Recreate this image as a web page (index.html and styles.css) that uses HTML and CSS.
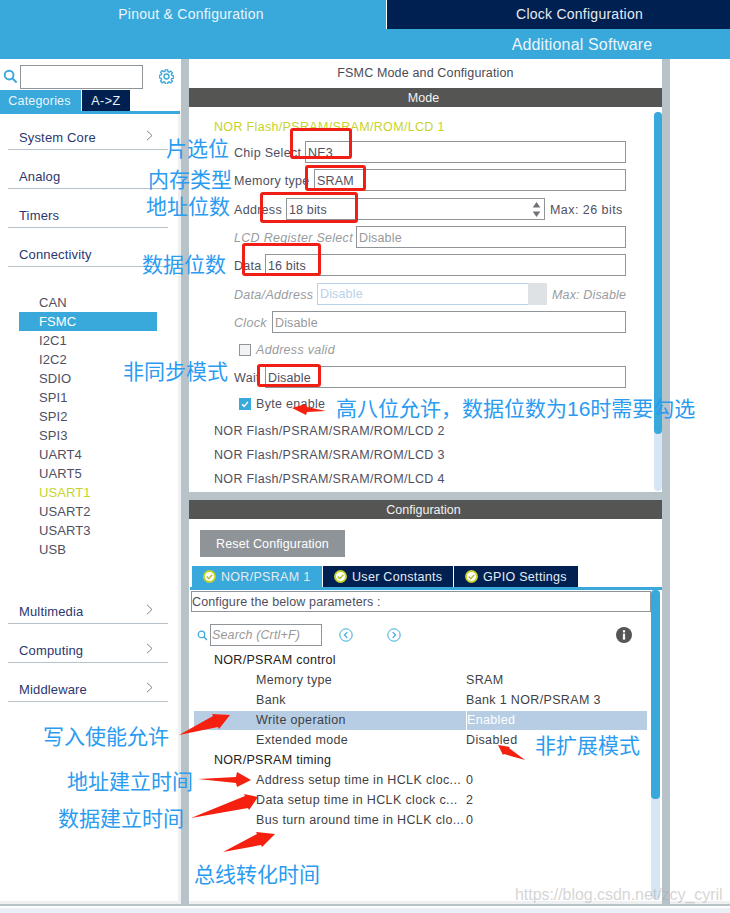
FILE: index.html
```html
<!DOCTYPE html>
<html lang="zh">
<head>
<meta charset="utf-8">
<title>FSMC Mode and Configuration</title>
<link rel="stylesheet" href="styles.css">
</head>
<body>
<div class="app">
  <header class="topbar">
    <div class="top-row">
      <div class="top-tab top-tab-active">Pinout &amp; Configuration</div>
      <div class="top-tab top-tab-dark">Clock Configuration</div>
    </div>
    <div class="sub-row"><span class="sub-title">Additional Software</span></div>
  </header>

  <div class="workspace">
    <aside class="sidebar">
      <div class="side-search">
        <svg class="ic-search" viewBox="0 0 16 16"><circle cx="6.5" cy="6.5" r="4.7" fill="none" stroke="#39a8db" stroke-width="2"/><path d="M10 10l4.5 4.5" stroke="#39a8db" stroke-width="2.2"/></svg>
        <div class="side-input"></div>
        <svg class="ic-gear" viewBox="0 0 18 18" fill="none" stroke="#39a8db"><circle cx="9" cy="9" r="3" stroke-width="1.6"/><path stroke-width="1.6" d="M7.6 1h2.8l.4 2.2 1.4.6 1.9-1.3 2 2-1.3 1.9.6 1.4 2.1.4v2.8l-2.1.4-.6 1.4 1.3 1.9-2 2-1.9-1.3-1.4.6-.4 2.1H7.6l-.4-2.1-1.4-.6-1.9 1.3-2-2 1.3-1.9-.6-1.4L.5 10.4V7.6l2.1-.4.6-1.4-1.3-1.9 2-2 1.9 1.3 1.4-.6z"/></svg>
      </div>
      <div class="side-tabs">
        <div class="side-tab side-tab-on">Categories</div>
        <div class="side-tab side-tab-off">A-&gt;Z</div>
      </div>
      <nav class="cats">
        <div class="cat"><span>System Core</span><svg class="chev" viewBox="0 0 7 11"><path d="M1 .8l5 4.7-5 4.7" fill="none" stroke="#7d8790"/></svg></div>
        <div class="cat"><span>Analog</span></div>
        <div class="cat"><span>Timers</span></div>
        <div class="cat"><span>Connectivity</span></div>
        <ul class="periphs">
          <li>CAN</li>
          <li class="on">FSMC</li>
          <li>I2C1</li>
          <li>I2C2</li>
          <li>SDIO</li>
          <li>SPI1</li>
          <li>SPI2</li>
          <li>SPI3</li>
          <li>UART4</li>
          <li>UART5</li>
          <li class="ok">USART1</li>
          <li>USART2</li>
          <li>USART3</li>
          <li>USB</li>
        </ul>
        <div class="cat"><span>Multimedia</span><svg class="chev" viewBox="0 0 7 11"><path d="M1 .8l5 4.7-5 4.7" fill="none" stroke="#7d8790"/></svg></div>
        <div class="cat"><span>Computing</span><svg class="chev" viewBox="0 0 7 11"><path d="M1 .8l5 4.7-5 4.7" fill="none" stroke="#7d8790"/></svg></div>
        <div class="cat"><span>Middleware</span><svg class="chev" viewBox="0 0 7 11"><path d="M1 .8l5 4.7-5 4.7" fill="none" stroke="#7d8790"/></svg></div>
      </nav>
    </aside>

    <main class="center">
      <section class="panel panel-mode">
        <div class="panel-title">FSMC Mode and Configuration</div>
        <div class="bar">Mode</div>
        <div class="mode-body">
          <div class="group group-on">NOR Flash/PSRAM/SRAM/ROM/LCD 1</div>
          <div class="form">
            <div class="row"><span class="lbl lbl-chip">Chip Select</span><span class="field grow">NE3</span></div>
            <div class="row"><span class="lbl lbl-mem">Memory type</span><span class="field grow">SRAM</span></div>
            <div class="row">
              <span class="lbl lbl-addr">Address</span>
              <span class="field field-spin">18 bits
                <svg class="spin" viewBox="0 0 9 18"><path d="M4.5 1L8.5 7H.5z" fill="#6d7278"/><path d="M.5 11h8l-4 6z" fill="#6d7278"/></svg>
              </span>
              <span class="note">Max: 26 bits</span>
            </div>
            <div class="row row-off"><span class="lbl lbl-lcd">LCD Register Select</span><span class="field grow">Disable</span></div>
            <div class="row"><span class="lbl lbl-data">Data</span><span class="field grow">16 bits</span></div>
            <div class="row row-off">
              <span class="lbl lbl-da">Data/Address</span>
              <span class="field field-light">Disable</span><span class="field-cap"></span>
              <span class="note note-off">Max: Disable</span>
            </div>
            <div class="row row-off"><span class="lbl lbl-clock">Clock</span><span class="field grow">Disable</span></div>
            <div class="check-row check-off"><span class="box"></span><span>Address valid</span></div>
            <div class="row"><span class="lbl lbl-wait">Wait</span><span class="field grow">Disable</span></div>
            <div class="check-row check-on"><span class="box box-on"><svg viewBox="0 0 12 12"><path d="M2.5 6.2l2.5 2.6 4.5-5.4" fill="none" stroke="#fff" stroke-width="1.7"/></svg></span><span>Byte enable</span></div>
          </div>
          <div class="group">NOR Flash/PSRAM/SRAM/ROM/LCD 2</div>
          <div class="group">NOR Flash/PSRAM/SRAM/ROM/LCD 3</div>
          <div class="group">NOR Flash/PSRAM/SRAM/ROM/LCD 4</div>
        </div>
        <div class="track track-mode"><div class="thumb thumb-mode"></div></div>
      </section>

      <section class="panel panel-config">
        <div class="bar">Configuration</div>
        <div class="reset">Reset Configuration</div>
        <div class="cfg-tabs">
          <div class="cfg-tab cfg-tab-on"><svg class="tick" viewBox="0 0 12 12"><circle cx="6" cy="6" r="5.1" fill="#fff" stroke="#c6d32d" stroke-width="1.7"/><path d="M3.4 6l1.9 2 3.3-3.6" fill="none" stroke="#b3c02a" stroke-width="1.3"/></svg>NOR/PSRAM 1</div>
          <div class="cfg-tab"><svg class="tick" viewBox="0 0 12 12"><circle cx="6" cy="6" r="5.1" fill="#fff" stroke="#c6d32d" stroke-width="1.7"/><path d="M3.4 6l1.9 2 3.3-3.6" fill="none" stroke="#b3c02a" stroke-width="1.3"/></svg>User Constants</div>
          <div class="cfg-tab"><svg class="tick" viewBox="0 0 12 12"><circle cx="6" cy="6" r="5.1" fill="#fff" stroke="#c6d32d" stroke-width="1.7"/><path d="M3.4 6l1.9 2 3.3-3.6" fill="none" stroke="#b3c02a" stroke-width="1.3"/></svg>GPIO Settings</div>
        </div>
        <div class="cfg-content">
          <div class="cfg-caption">Configure the below parameters :</div>
          <div class="cfg-tools">
            <svg class="ic-search-sm" viewBox="0 0 16 16"><circle cx="6.5" cy="6.5" r="4.7" fill="none" stroke="#39a8db" stroke-width="1.8"/><path d="M10 10l4.5 4.5" stroke="#39a8db" stroke-width="2"/></svg>
            <div class="cfg-search">Search (Crtl+F)</div>
            <svg class="nav-btn nav-prev" viewBox="0 0 14 14" fill="none" stroke="#39a8db"><circle cx="7" cy="7" r="6.2"/><path d="M8.3 4.2L5.5 7l2.8 2.8" stroke-width="1.2"/></svg>
            <svg class="nav-btn nav-next" viewBox="0 0 14 14" fill="none" stroke="#39a8db"><circle cx="7" cy="7" r="6.2"/><path d="M5.7 4.2L8.5 7l-2.8 2.8" stroke-width="1.2"/></svg>
            <svg class="ic-info" viewBox="0 0 16 16"><circle cx="8" cy="8" r="8" fill="#555654"/><rect x="6.9" y="6.6" width="2.2" height="6" fill="#fff"/><rect x="6.9" y="3.2" width="2.2" height="2.2" fill="#fff"/></svg>
          </div>
          <div class="tree">
            <div class="t-head">NOR/PSRAM control</div>
            <div class="t-row"><span class="t-name">Memory type</span><span class="t-val">SRAM</span></div>
            <div class="t-row"><span class="t-name">Bank</span><span class="t-val">Bank 1 NOR/PSRAM 3</span></div>
            <div class="t-row t-sel"><span class="t-name">Write operation</span><span class="t-val">Enabled</span></div>
            <div class="t-row"><span class="t-name">Extended mode</span><span class="t-val">Disabled</span></div>
            <div class="t-head">NOR/PSRAM timing</div>
            <div class="t-row"><span class="t-name">Address setup time in HCLK cloc...</span><span class="t-val">0</span></div>
            <div class="t-row"><span class="t-name">Data setup time in HCLK clock c...</span><span class="t-val">2</span></div>
            <div class="t-row"><span class="t-name">Bus turn around time in HCLK clo...</span><span class="t-val">0</span></div>
          </div>
          <div class="track track-cfg"><div class="thumb thumb-cfg"></div></div>
        </div>
      </section>
    </main>
    <div class="right-blank"></div>
  </div>

  <div class="statusbar"></div>

  <div class="mark m-chip"></div>
  <div class="mark m-mem"></div>
  <div class="mark m-addr"></div>
  <div class="mark m-data"></div>
  <div class="mark m-wait"></div>

  <svg class="arrows" viewBox="0 0 730 913" fill="#f5200f">
    <polygon points="326,411 307,407 306,404 292,408 306,415 307,412"/>
    <polygon points="179,735 213,716 212,714 230,715 219,729 218,727"/>
    <polygon points="198,779 236,777 237,772 251,780 237,787 236,783"/>
    <polygon points="191,818 245,796 244,794 258,797 249,810 248,808"/>
    <polygon points="223,852 257,834 256,832 275,834 262,847 261,845"/>
    <polygon points="525,760 509,748 510,747 498,745 503,755 504,754"/>
  </svg>

  <span class="note-cn n-chip">片选位</span>
  <span class="note-cn n-mem">内存类型</span>
  <span class="note-cn n-addr">地址位数</span>
  <span class="note-cn n-data">数据位数</span>
  <span class="note-cn n-async">非同步模式</span>
  <span class="note-cn n-byte">高八位允许，数据位数为16时需要勾选</span>
  <span class="note-cn n-write">写入使能允许</span>
  <span class="note-cn n-ext">非扩展模式</span>
  <span class="note-cn n-asetup">地址建立时间</span>
  <span class="note-cn n-dsetup">数据建立时间</span>
  <span class="note-cn n-bus">总线转化时间</span>
  <span class="watermark">https://blog.csdn.net/zcy_cyril</span>
</div>
</body>
</html>
```
FILE: styles.css
```css
* { box-sizing: border-box; }
html, body { margin: 0; padding: 0; background: #fff; }
body { font-family: "Liberation Sans", "Noto Sans CJK SC", sans-serif; font-size: 13px; color: #4f4f5f; }
.app { position: relative; width: 730px; height: 913px; overflow: hidden; display: flex; flex-direction: column; background: #fff; }

/* header */
.topbar { height: 59px; background: #39a8db; color: #fff; flex: none; }
.top-row { display: flex; height: 29px; }
.top-tab { display: flex; align-items: center; justify-content: center; font-size: 14px; letter-spacing: .25px; padding-bottom: 1px; }
.top-tab-active { width: 386px; color: #eaf6fb; padding-right: 4px; }
.top-tab-dark { width: 344px; background: #002052; border-left: 1px solid #fff; color: #e6ebf0; padding-left: 42px; }
.sub-row { height: 30px; display: flex; justify-content: center; padding: 1px 0 0 434px; align-items: center; }
.sub-title { font-size: 16px; letter-spacing: .15px; white-space: nowrap; color: #eaf6fb; }

/* layout */
.workspace { flex: 1; display: flex; min-height: 0; background: #b8c2c9; padding-bottom: 2px; }
.sidebar { width: 181px; background: #fff; flex: none; margin-right: 8px; position: relative; border-bottom: 3px solid #eef0f2; }
.sidebar::after { content: ""; position: absolute; right: 0; top: 55px; bottom: 0; width: 3px; background: #eef0f2; }
.center { width: 473px; flex: none; display: flex; flex-direction: column; gap: 8px; }
.right-blank { width: 60px; margin-left: 8px; background: #fff; border-bottom: 3px solid #eef0f2; }
.statusbar { height: 7px; flex: none; background: #eaeff8; border-top: 2px solid #fff; }

/* sidebar */
.side-search { height: 31px; display: flex; align-items: center; padding: 4px 0 0 3px; }
.ic-search { width: 15px; height: 15px; flex: none; }
.side-input { width: 123px; height: 24px; margin-left: 2px; border: 1px solid #8f9499; }
.ic-gear { width: 15px; height: 15px; margin-left: 16px; flex: none; }
.side-tabs { display: flex; height: 24px; border-bottom: 3px solid #39a8db; width: 180px; }
.side-tab { display: flex; align-items: center; justify-content: center; height: 21px; font-size: 12.5px; letter-spacing: .5px; color: #eaf6fb; }
.side-tab-on { width: 81px; background: #39a8db; letter-spacing: .2px; padding-right: 2px; }
.side-tab-off { width: 48px; background: #002052; margin-left: 1px; }
.cats { padding-top: 6px; display: flex; flex-direction: column; gap: 9px; margin-left: 8px; width: 160px; }
.cat { height: 30px; border-bottom: 1px solid #b8c2c9; padding: 9px 15px 0 11px; display: flex; justify-content: space-between; align-items: flex-start; color: #2c3770; line-height: 18px; font-size: 13px; letter-spacing: .15px; position: relative; }
.chev { width: 7px; height: 11px; margin-top: 1px; }
.periphs { list-style: none; margin: 17px 0 26px; padding: 0 0 0 11px; width: 149px; }
.periphs li { height: 19px; line-height: 19px; padding-left: 20px; width: 138px; font-size: 13px; letter-spacing: .1px; color: #4f4f5f; }
.periphs li.on { background: #39a8db; color: #fff; }
.periphs li.ok { color: #c6d32d; }

/* panels */
.panel { background: #fff; position: relative; }
.panel-mode { height: 433px; }
.panel-config { height: 404px; display: flex; flex-direction: column; border-bottom: 3px solid #eef0f2; }
.panel-title { height: 29px; line-height: 29px; text-align: center; font-size: 12.5px; letter-spacing: .15px; color: #4a4a55; }
.bar { height: 19px; line-height: 20px; background: #555654; color: #f2f2f2; text-align: center; font-size: 12.5px; flex: none; padding-right: 4px; }
.mode-body { padding: 9px 0 0 25px; }
.group { height: 24px; line-height: 24px; font-size: 12.5px; letter-spacing: .33px; color: #4f4f5f; }
.group-on { height: 20px; line-height: 22px; color: #c6d32d; }
.form { padding: 5px 0 0 20px; margin-bottom: -1px; width: 412px; display: flex; flex-direction: column; }
.row { display: flex; align-items: center; height: 22px; margin-bottom: 6.33px; white-space: nowrap; }
.lbl { flex: none; font-size: 12.5px; letter-spacing: .3px; padding-top: 2px; }
.lbl-chip { width: 71px; }
.lbl-mem { width: 80px; }
.lbl-addr { width: 52px; }
.lbl-lcd { width: 122px; }
.lbl-data { width: 31px; }
.lbl-da { width: 83px; }
.lbl-clock { width: 38px; }
.lbl-wait { width: 31px; }
.field { height: 22px; line-height: 22px; border: 1px solid #8f9499; padding-left: 2px; font-size: 12.5px; letter-spacing: .15px; position: relative; }
.grow { flex: 1; }
.field-spin { width: 259px; flex: none; }
.spin { position: absolute; right: 3px; top: 2px; width: 9px; height: 17px; }
.note { margin-left: 5px; font-size: 12.5px; letter-spacing: .45px; padding-top: 2px; }
.row-off .lbl { font-style: italic; color: #9a9ca0; }
.row-off .field { color: #999; }
.field-light { width: 211px; flex: none; border-color: #b9d1ea; border-right: 0; color: #b9d1ea !important; line-height: 20px; }
.field-cap { width: 19px; height: 22px; background: #dfe2e5; flex: none; }
.note-off { font-style: italic; color: #9a9ca0; letter-spacing: .15px; }
.check-row { display: flex; align-items: center; height: 16px; margin: 1px 0 8px 5px; font-size: 12.5px; letter-spacing: .3px; gap: 5px; }
.check-off { color: #9a9ca0; font-style: italic; margin-top: 3px; }
.box { width: 12px; height: 12px; border: 1px solid #8f9499; background: #f2f3f4; flex: none; }
.box-on { background: #39a8db; border-color: #39a8db; display: flex; }
.box-on svg { width: 10px; height: 10px; }
.track { position: absolute; background: #d6e6f4; border-radius: 4px; }
.thumb { background: #39a8db; border-radius: 4px; width: 100%; }
.track-mode { right: 0; top: 53px; width: 8px; height: 379px; }
.thumb-mode { height: 322px; }
.track-cfg { left: 462px; top: 0; width: 9px; height: 309px; }
.thumb-cfg { height: 209px; }

/* configuration */
.reset { margin: 11px 0 0 11px; width: 145px; height: 27px; line-height: 28px; background: #8f9499; color: #fff; text-align: center; font-size: 12.5px; letter-spacing: .12px; flex: none; }
.cfg-tabs { display: flex; margin: 9px 0 0 1px; padding-left: 2px; height: 24px; gap: 1px; border-bottom: 3px solid #39a8db; flex: none; }
.cfg-tab { height: 21px; background: #002052; color: #e6ebf0; font-size: 12.5px; letter-spacing: .3px; display: flex; align-items: center; padding-left: 11px; gap: 5px; white-space: nowrap; width: 130px; }
.cfg-tab:last-child { width: 124px; }
.cfg-tab-on { background: #39a8db; }
.tick { width: 13px; height: 13px; flex: none; }
.cfg-content { position: relative; padding: 1px 0 0 2px; flex: 1; }
.cfg-caption { width: 460px; height: 21px; line-height: 21px; border: 1px solid #8f9499; padding-left: 0; font-size: 12.5px; letter-spacing: .12px; }
.cfg-tools { display: flex; align-items: center; height: 22px; margin-top: 12px; padding-left: 6px; }
.ic-search-sm { width: 11px; height: 11px; flex: none; }
.cfg-search { width: 112px; height: 22px; margin-left: 2px; border: 1px solid #8f9499; font-style: italic; color: #999; font-size: 12.5px; letter-spacing: .15px; line-height: 21px; padding-left: 1px; }
.nav-btn { width: 14px; height: 14px; flex: none; }
.nav-prev { margin-left: 17px; }
.nav-next { margin-left: 34px; }
.ic-info { width: 16px; height: 16px; margin-left: 215px; flex: none; }
.tree { margin-top: 3px; padding: 1px 0 0 3px; width: 456px; letter-spacing: .35px; }
.t-head { height: 20px; line-height: 20px; padding-left: 20px; font-size: 12.5px; color: #222; letter-spacing: .3px; }
.t-row { height: 20px; line-height: 21px; display: flex; font-size: 12.5px; color: #3f3f45; }
.t-name { width: 272px; padding-left: 62px; white-space: nowrap; }
.t-val { flex: 1; white-space: nowrap; }
.t-sel { background: #b6cde4; height: 19px; margin-top: 1px; line-height: 19px; }
.t-sel .t-val { border-left: 1px solid #fff; color: #fff; }

/* annotations over the screenshot */
.mark { position: absolute; border: 3px solid #f01e14; border-radius: 3px; }
.m-chip { left: 290px; top: 128px; width: 62px; height: 31px; }
.m-mem { left: 305px; top: 165px; width: 61px; height: 26px; }
.m-addr { left: 260px; top: 192px; width: 98px; height: 31px; }
.m-data { left: 242px; top: 243px; width: 79px; height: 33px; }
.m-wait { left: 257px; top: 364px; width: 64px; height: 23px; }
.arrows { position: absolute; left: 0; top: 0; width: 730px; height: 913px; pointer-events: none; }
.note-cn { position: absolute; font-size: 21px; line-height: 24px; color: #2b9bf0; white-space: nowrap; }
.n-chip { left: 166px; top: 137px; }
.n-mem { left: 148px; top: 168px; }
.n-addr { left: 146px; top: 195px; }
.n-data { left: 142px; top: 253px; }
.n-async { left: 123px; top: 360px; }
.n-byte { left: 336px; top: 397px; }
.n-write { left: 43px; top: 725px; }
.n-ext { left: 535px; top: 734px; }
.n-asetup { left: 67px; top: 770px; }
.n-dsetup { left: 58px; top: 807px; }
.n-bus { left: 194px; top: 863px; }
.watermark { position: absolute; left: 515px; top: 885px; font-size: 16px; line-height: 20px; letter-spacing: -.05px; color: rgba(170,170,170,.5); white-space: nowrap; }
```
